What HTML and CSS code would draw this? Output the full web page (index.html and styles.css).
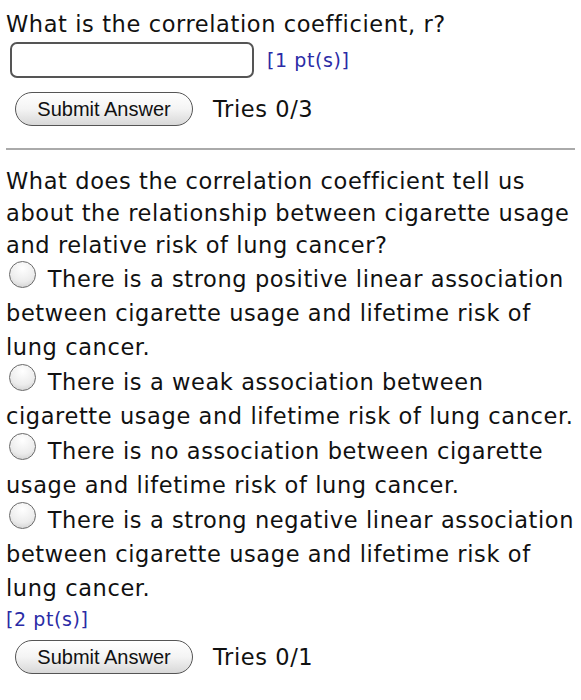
FILE: index.html
```html
<!DOCTYPE html>
<html lang="en">
<head>
    <meta charset="UTF-8">
    <title>Correlation</title>
    <link rel="stylesheet" href="styles.css">
</head>
<body>
<div class="problem">
    <div class="question">What is the correlation coefficient, r?</div>
    <div class="answer-row">
        <input type="text" class="answer-box">
        <span class="points">[1 pt(s)]</span>
    </div>
    <div class="submit-row">
        <button class="submit">Submit Answer</button>
        <span class="tries">Tries 0/3</span>
    </div>
</div>

<hr class="divider">

<div class="problem">
    <div class="question">What does the correlation coefficient tell us about the relationship between cigarette usage and relative risk of lung cancer?</div>
    <div class="choices">
        <label class="choice"><span class="radio"></span> There is a strong positive linear association between cigarette usage and lifetime risk of lung cancer.</label>
        <label class="choice"><span class="radio"></span> There is a weak association between cigarette usage and lifetime risk of lung cancer.</label>
        <label class="choice"><span class="radio"></span> There is no association between cigarette usage and lifetime risk of lung cancer.</label>
        <label class="choice"><span class="radio"></span> There is a strong negative linear association between cigarette usage and lifetime risk of lung cancer.</label>
    </div>
    <div class="points">[2 pt(s)]</div>
    <div class="submit-row last">
        <button class="submit">Submit Answer</button>
        <span class="tries">Tries 0/1</span>
    </div>
</div>
</body>
</html>
```

FILE: styles.css
```css
* {
    margin: 0;
    padding: 0;
}

body {
    margin: 0;
    padding: 8px 6px;
    background: #fff;
    color: #111;
    font-family: "DejaVu Sans", Verdana, sans-serif;
    font-size: 22.5px;
    letter-spacing: 0.6px;
    line-height: 32px;
}

.answer-row {
    display: flex;
    align-items: center;
    gap: 13px;
    margin: 2px 0 0 4px;
}

.answer-box {
    width: 244px;
    height: 36px;
    box-sizing: border-box;
    border: 2px solid #555;
    border-radius: 7px;
    background: #fff;
}

.points {
    color: #2b2ba6;
    font-size: 19px;
    letter-spacing: 0.6px;
    line-height: 28px;
}

.submit-row {
    display: flex;
    align-items: center;
    gap: 20px;
    margin: 14px 0 0 9px;
}

.submit-row.last {
    margin-top: 7px;
}

.submit {
    width: 178px;
    height: 34px;
    border: 1.5px solid #555;
    border-radius: 17px;
    background: linear-gradient(#ffffff, #f4f4f4 50%, #d8d8d8);
    font-family: "Liberation Sans", Arial, sans-serif;
    font-size: 20px;
    letter-spacing: 0;
    color: #111;
}

.divider {
    border: none;
    border-top: 2px solid #aaa;
    margin: 22px 0 15px;
}

.choice {
    display: block;
    line-height: 34px;
}

.radio {
    display: inline-block;
    width: 27px;
    height: 27px;
    box-sizing: border-box;
    border: 1.5px solid #6a6a6a;
    border-radius: 50%;
    background: radial-gradient(circle at 50% 25%, #fff, #ececec 60%, #c8c8c8);
    vertical-align: -1px;
    margin: 0 4px 0 3px;
}
```
